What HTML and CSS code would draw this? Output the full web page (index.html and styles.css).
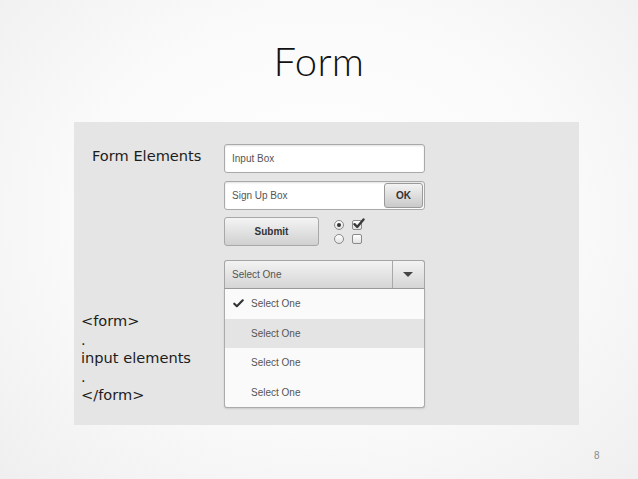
FILE: index.html
```html
<!DOCTYPE html>
<html>
<head>
<meta charset="utf-8">
<link rel="stylesheet" href="styles.css">
</head>
<body>
<div class="slide">
  <h1 class="title">Form</h1>
  <div class="panel">
    <div class="left">
      <div class="label">Form Elements</div>
      <div class="code">
        <div>&lt;form&gt;</div>
        <div>.</div>
        <div>input elements</div>
        <div>.</div>
        <div>&lt;/form&gt;</div>
      </div>
    </div>
    <div class="right">
      <div class="field">Input Box</div>
      <div class="field signup"><span>Sign Up Box</span><span class="ok">OK</span></div>
      <div class="row">
        <div class="submit">Submit</div>
        <div class="checks">
          <span class="radio on"></span><span class="box on"><svg viewBox="0 0 12 12" width="12" height="12"><path d="M1.5 6.2 L4.2 9 L10.5 1.5" fill="none" stroke="#3a3a3a" stroke-width="2.4" stroke-linecap="round" stroke-linejoin="round"/></svg></span>
          <span class="radio"></span><span class="box"></span>
        </div>
      </div>
      <div class="select"><span class="sel-text">Select One</span><span class="arrow"></span></div>
      <div class="list">
        <div class="item"><svg class="tick" viewBox="0 0 12 10" width="11" height="9"><path d="M1.3 5.2 L4.2 8 L10.7 1.5" fill="none" stroke="#333" stroke-width="2.4" stroke-linecap="round" stroke-linejoin="round"/></svg>Select One</div>
        <div class="item hl">Select One</div>
        <div class="item">Select One</div>
        <div class="item">Select One</div>
      </div>
    </div>
  </div>
  <div class="page">8</div>
</div>
</body>
</html>
```
FILE: styles.css
```css
html, body { margin: 0; padding: 0; }
body { width: 638px; height: 479px; overflow: hidden; }
.slide {
  width: 638px; height: 479px;
  background: radial-gradient(ellipse at 50% 45%, #ffffff 0%, #fafafa 55%, #efefef 100%);
  position: relative;
  font-family: "Lato", "DejaVu Sans", sans-serif;
  color: #1a1a1a;
  display: flex; flex-direction: column;
}
.title {
  margin: 0; padding-top: 37px; height: 122px; box-sizing: border-box;
  font-weight: 300; font-size: 40px; line-height: 48px;
  text-align: center; color: #111;
  letter-spacing: 0.3px;
}
.panel {
  margin-left: 74px; width: 505px; height: 303px;
  background: #e5e5e5;
  display: flex;
  box-sizing: border-box;
  padding-top: 22px;
}
.left {
  width: 150px; box-sizing: border-box; padding-left: 18px;
  display: flex; flex-direction: column;
  font-family: "DejaVu Sans", sans-serif;
  font-size: 14.6px; color: #1c1c1c;
}
.label { margin-top: 3px; line-height: 18px; }
.code { margin-top: 147px; margin-left: -11px; line-height: 18.5px; }
.right {
  width: 201px;
  display: flex; flex-direction: column;
  font-family: "Liberation Sans", Arial, sans-serif;
  font-size: 10px; color: #555;
}
.field {
  height: 29px; box-sizing: border-box;
  background: #fff; border: 1px solid #a9a9a9; border-radius: 3px;
  box-shadow: inset 0 1px 2px rgba(0,0,0,0.12);
  padding-left: 7px; display: flex; align-items: center;
}
.signup { margin-top: 8px; justify-content: space-between; padding-right: 1px; }
.ok {
  width: 39px; height: 25px; box-sizing: border-box;
  border: 1px solid #9a9a9a; border-radius: 3px;
  background: linear-gradient(#f3f3f3, #c9c9c9);
  font-weight: bold; color: #333; font-size: 10px;
  display: flex; align-items: center; justify-content: center;
}
.row { margin-top: 7px; display: flex; align-items: center; height: 29px; }
.submit {
  width: 95px; height: 29px; box-sizing: border-box;
  border: 1px solid #a8a8a8; border-radius: 3px;
  background: linear-gradient(#f4f4f4, #d0d0d0);
  font-weight: bold; color: #333;
  display: flex; align-items: center; justify-content: center;
}
.checks {
  margin-left: 15px;
  display: grid; grid-template-columns: 10px 10px; column-gap: 8px; row-gap: 4px;
}
.radio, .box {
  width: 10px; height: 10px; box-sizing: border-box;
  border: 1px solid #8a8a8a; background: linear-gradient(#fff, #e2e2e2);
  position: relative;
}
.radio { border-radius: 50%; }
.radio.on::after {
  content: ""; position: absolute; left: 2px; top: 2px; width: 4px; height: 4px;
  border-radius: 50%; background: #333;
}
.box { border-radius: 2px; }
.box svg { position: absolute; left: 0px; top: -3px; }
.select {
  margin-top: 14px; height: 29px; box-sizing: border-box;
  border: 1px solid #a5a5a5; border-bottom-color: #9a9a9a; border-radius: 3px 3px 0 0;
  background: linear-gradient(#f3f3f3, #d5d5d5);
  display: flex; align-items: center;
}
.sel-text { flex: 1; padding-left: 7px; color: #555; }
.arrow {
  width: 31px; height: 100%; border-left: 1px solid #a8a8a8; position: relative;
}
.arrow::after {
  content: ""; position: absolute; left: 10px; top: 11px;
  border-left: 5px solid transparent; border-right: 5px solid transparent;
  border-top: 5px solid #444;
}
.list {
  height: 119px; box-sizing: border-box;
  border: 1px solid #ababab; border-top: none; border-radius: 0 0 3px 3px;
  background: #fafafa;
  box-shadow: 0 1px 2px rgba(0,0,0,0.12);
  display: flex; flex-direction: column;
}
.item {
  flex: 1; display: flex; align-items: center; padding-left: 26px; position: relative;
  color: #555;
}
.item.hl { background: #e4e4e4; }
.tick { position: absolute; left: 8px; top: 10px; }
.page {
  position: absolute; left: 594px; top: 450px;
  font-size: 10px; color: #8a8a8a; font-family: "Liberation Sans", Arial, sans-serif;
}
```
